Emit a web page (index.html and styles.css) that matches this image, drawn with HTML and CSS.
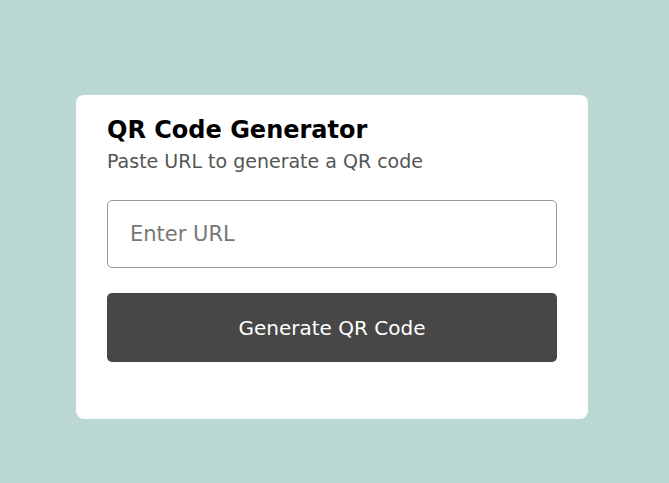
FILE: index.html
```html
<!DOCTYPE html>
<html lang="en">

<head>
    <meta charset="UTF-8">
    <meta name="viewport" content="width=device-width, initial-scale=1.0">
    <title>QR Code Generator</title>
    <link rel="stylesheet" href="styles.css">
</head>

<body>
    <div class="wrapper">
        <div class="header">
            <h1>QR Code Generator</h1>
            <p>Paste URL to generate a QR code</p>
        </div>
        <div class="form">
            <input type="text" placeholder="Enter URL">
            <button type="button">Generate QR Code</button>
        </div>
    </div>
</body>

</html>
```

FILE: styles.css
```css
* {
    margin: 0;
    padding: 0;
    box-sizing: border-box;
}

body {
    font-family: "DejaVu Sans", Verdana, sans-serif;
    background-color: #bbd9d2;
    min-height: 100vh;
    padding-top: 95px;
}

.wrapper {
    width: 512px;
    margin: 0 auto 0 76px;
    background: #fff;
    border-radius: 8px;
    padding: 21px 31px 57px;
}

.header h1 {
    font-size: 24px;
    font-weight: bold;
    color: #000;
    line-height: 28px;
    margin-bottom: 6px;
}

.header p {
    font-size: 19px;
    color: #555;
    line-height: 22px;
}

.form {
    margin-top: 28px;
}

.form input {
    display: block;
    width: 100%;
    height: 68px;
    border: 1px solid #999;
    border-radius: 5px;
    padding: 0 22px;
    font-family: inherit;
    font-size: 21px;
    color: #333;
    outline: none;
}

.form input::placeholder {
    color: #777;
}

.form button {
    display: block;
    width: 100%;
    height: 69px;
    margin-top: 25px;
    border: none;
    border-radius: 5px;
    background: #474747;
    color: #fff;
    font-family: inherit;
    font-size: 20px;
    cursor: pointer;
}
```
